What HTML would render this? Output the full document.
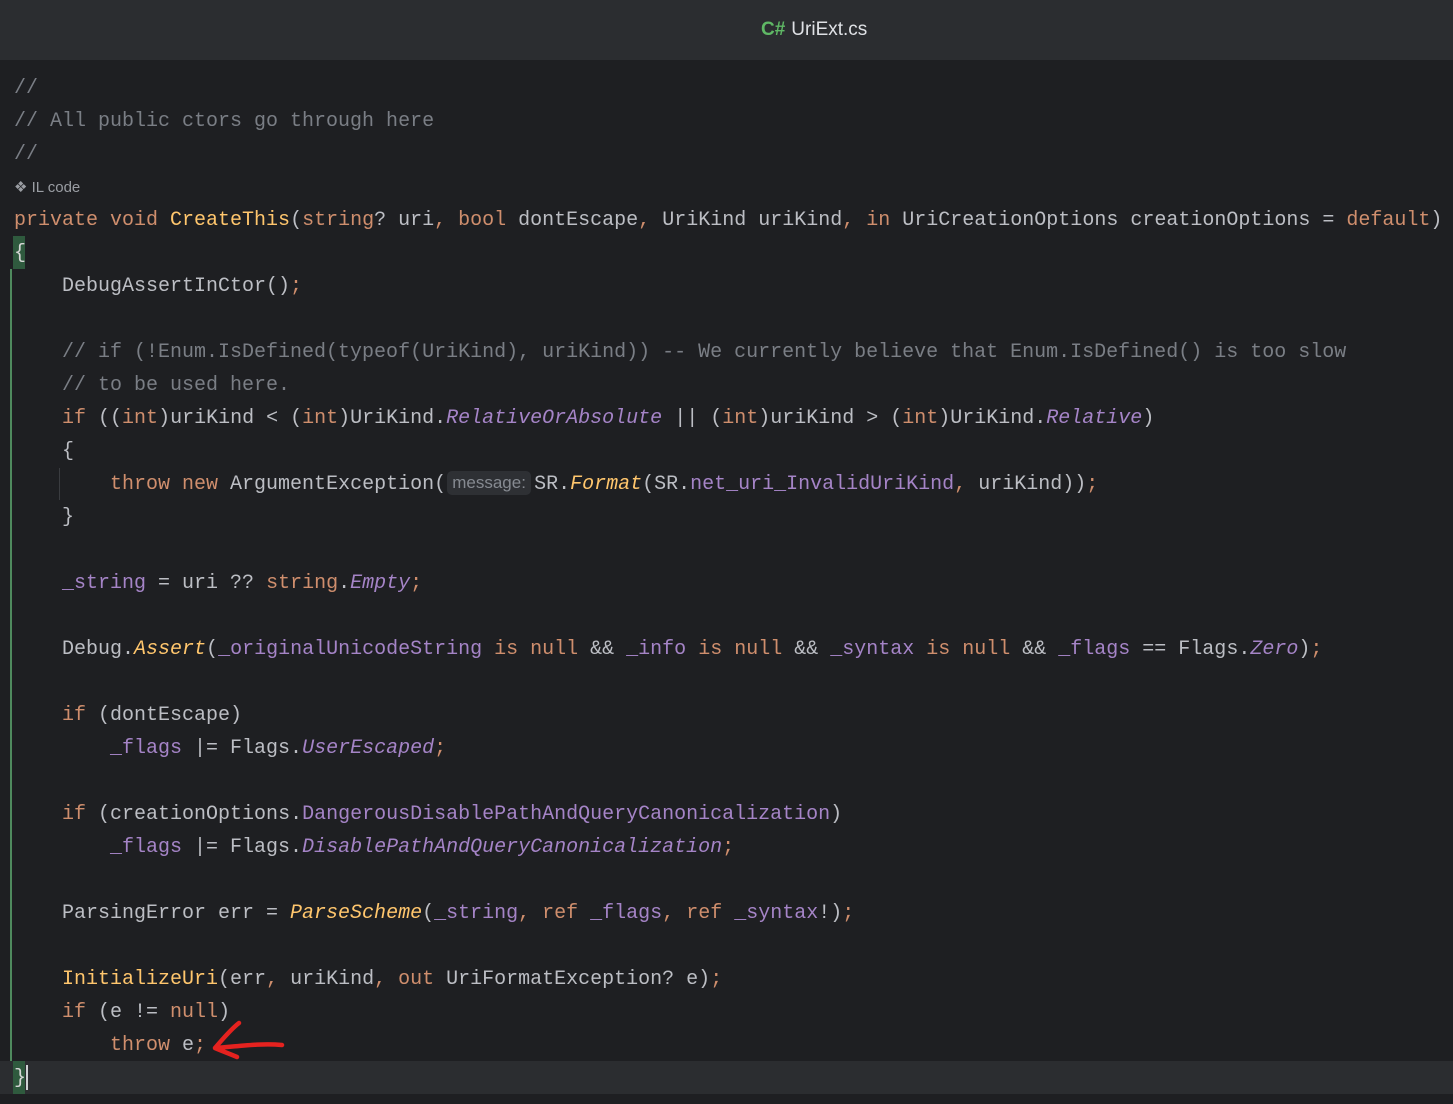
<!DOCTYPE html>
<html><head><meta charset="utf-8"><style>
html,body{margin:0;padding:0;}
body{width:1453px;height:1104px;background:#1e1f22;position:relative;overflow:hidden;font-family:"Liberation Mono",monospace;font-size:20px;color:#bcbec4;}
.title{position:absolute;left:0;top:0;width:1453px;height:60px;background:#2b2d30;}
.title span{position:absolute;left:761px;top:19px;font-family:"Liberation Sans",sans-serif;font-size:19px;color:#dfe1e5;}
.title b{color:#5fb865;font-weight:bold;margin-right:6px;}
.l{position:absolute;left:14px;height:33px;line-height:33px;white-space:pre;}
.k{color:#cf8e6d}.c{color:#7a7e85}.m{color:#ffc66d}.mi{color:#ffc66d;font-style:italic}
.f{color:#a584c7}.fi{color:#a584c7;font-style:italic}.p{color:#cf8e6d}
.hint{display:inline-block;width:84px;height:24px;line-height:24px;margin:0 3px 0 1px;background:#2e3034;border-radius:5px;font-family:"Liberation Sans",sans-serif;font-size:17px;color:#868a91;text-align:center;vertical-align:1px;}
.il{position:absolute;left:14px;top:178px;font-family:"Liberation Sans",sans-serif;font-size:15px;color:#9a9da3;}
.gut{position:absolute;left:10px;top:269px;width:2px;height:792px;background:#4f8a5e;}
.cur{position:absolute;left:0;top:1061px;width:1453px;height:33px;background:#2b2d30;}
.br{position:absolute;left:13px;width:12px;height:33px;background:#2f5a3e;}
.guide{position:absolute;left:59px;top:468px;width:1px;height:32px;background:#3a3c40;}
</style></head><body>
<div class="title"><span><b>C#</b>UriExt.cs</span></div>
<div class="cur"></div>
<div class="br" style="top:236px"></div>
<div class="br" style="top:1061px"></div>
<div class="gut"></div>
<div class="guide"></div>
<div class="l c" style="top:72px">//</div>
<div class="l c" style="top:105px">// All public ctors go through here</div>
<div class="l c" style="top:138px">//</div>
<div class="il">❖ IL code</div>
<div class="l" style="top:204px"><span class="k">private void </span><span class="m">CreateThis</span>(<span class="k">string</span>? uri<span class="p">,</span> <span class="k">bool</span> dontEscape<span class="p">,</span> UriKind uriKind<span class="p">,</span> <span class="k">in</span> UriCreationOptions creationOptions = <span class="k">default</span>)</div>
<div class="l" style="top:237px;color:#d6d6d6">{</div>
<div class="l" style="top:270px">    DebugAssertInCtor()<span class="p">;</span></div>
<div class="l c" style="top:336px">    // if (!Enum.IsDefined(typeof(UriKind), uriKind)) -- We currently believe that Enum.IsDefined() is too slow</div>
<div class="l c" style="top:369px">    // to be used here.</div>
<div class="l" style="top:402px">    <span class="k">if</span> ((<span class="k">int</span>)uriKind &lt; (<span class="k">int</span>)UriKind.<span class="fi">RelativeOrAbsolute</span> || (<span class="k">int</span>)uriKind &gt; (<span class="k">int</span>)UriKind.<span class="fi">Relative</span>)</div>
<div class="l" style="top:435px">    {</div>
<div class="l" style="top:468px">        <span class="k">throw new </span>ArgumentException(<span class="hint">message:</span>SR.<span class="mi">Format</span>(SR.<span class="f">net_uri_InvalidUriKind</span><span class="p">,</span> uriKind))<span class="p">;</span></div>
<div class="l" style="top:501px">    }</div>
<div class="l" style="top:567px">    <span class="f">_string</span> = uri ?? <span class="k">string</span>.<span class="fi">Empty</span><span class="p">;</span></div>
<div class="l" style="top:633px">    Debug.<span class="mi">Assert</span>(<span class="f">_originalUnicodeString</span> <span class="k">is null</span> &amp;&amp; <span class="f">_info</span> <span class="k">is null</span> &amp;&amp; <span class="f">_syntax</span> <span class="k">is null</span> &amp;&amp; <span class="f">_flags</span> == Flags.<span class="fi">Zero</span>)<span class="p">;</span></div>
<div class="l" style="top:699px">    <span class="k">if</span> (dontEscape)</div>
<div class="l" style="top:732px">        <span class="f">_flags</span> |= Flags.<span class="fi">UserEscaped</span><span class="p">;</span></div>
<div class="l" style="top:798px">    <span class="k">if</span> (creationOptions.<span class="f">DangerousDisablePathAndQueryCanonicalization</span>)</div>
<div class="l" style="top:831px">        <span class="f">_flags</span> |= Flags.<span class="fi">DisablePathAndQueryCanonicalization</span><span class="p">;</span></div>
<div class="l" style="top:897px">    ParsingError err = <span class="mi">ParseScheme</span>(<span class="f">_string</span><span class="p">,</span> <span class="k">ref</span> <span class="f">_flags</span><span class="p">,</span> <span class="k">ref</span> <span class="f">_syntax</span>!)<span class="p">;</span></div>
<div class="l" style="top:963px">    <span class="m">InitializeUri</span>(err<span class="p">,</span> uriKind<span class="p">,</span> <span class="k">out</span> UriFormatException? e)<span class="p">;</span></div>
<div class="l" style="top:996px">    <span class="k">if</span> (e != <span class="k">null</span>)</div>
<div class="l" style="top:1029px">        <span class="k">throw</span> e<span class="p">;</span></div>
<div class="l" style="top:1062px;color:#d6d6d6">}</div>
<div style="position:absolute;left:26px;top:1065px;width:2px;height:25px;background:#cfd1d4"></div>
<svg style="position:absolute;left:0;top:0" width="1453" height="1104"><path d="M282 1045 C262 1043 240 1046 216 1048 M239 1023 C230 1030 222 1040 215 1048 C222 1051 230 1054 237 1057" stroke="#e5221f" stroke-width="4.5" fill="none" stroke-linecap="round" stroke-linejoin="round"/></svg>
</body></html>
